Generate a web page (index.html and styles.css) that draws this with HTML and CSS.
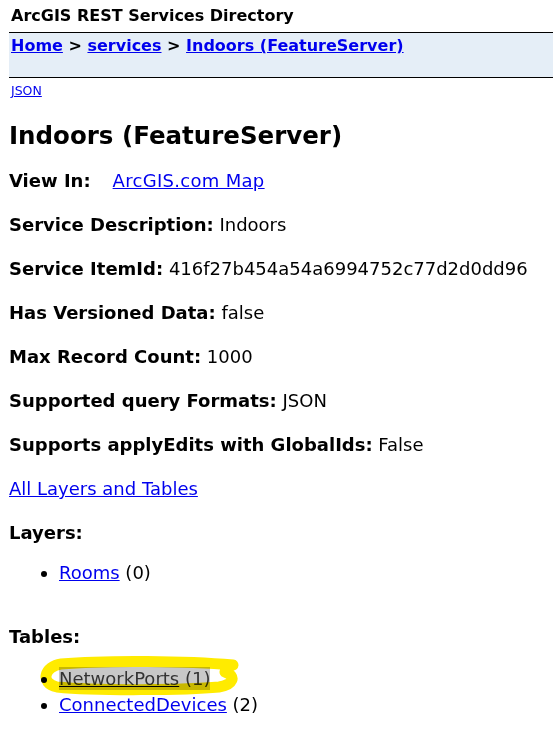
FILE: index.html
```html
<!DOCTYPE html>
<html>
<head>
<meta charset="utf-8">
<title>Indoors (FeatureServer)</title>
<link rel="stylesheet" href="styles.css">
</head>
<body>
<div class="header">ArcGIS REST Services Directory</div>
<div class="nav"><a href="#">Home</a> &gt; <a href="#">services</a> &gt; <a href="#">Indoors (FeatureServer)</a></div>
<div class="json"><a href="#">JSON</a></div>
<h2 class="title">Indoors (FeatureServer)</h2>
<div class="content">
  <p class="row first"><b>View In:</b><a class="viewin" href="#">ArcGIS.com Map</a></p>
  <p class="row"><b>Service Description:</b> Indoors</p>
  <p class="row"><b>Service ItemId:</b> 416f27b454a54a6994752c77d2d0dd96</p>
  <p class="row"><b>Has Versioned Data:</b> false</p>
  <p class="row"><b>Max Record Count:</b> 1000</p>
  <p class="row"><b>Supported query Formats:</b> JSON</p>
  <p class="row"><b>Supports applyEdits with GlobalIds:</b> False</p>
  <p class="row"><a href="#">All Layers and Tables</a></p>
  <p class="row"><b>Layers:</b></p>
  <ul class="list layers">
    <li><a href="#">Rooms</a> (0)</li>
  </ul>
  <p class="row tables-head"><b>Tables:</b></p>
  <ul class="list tables">
    <li class="marked"><span class="sel"><a href="#">NetworkPorts</a> (1)</span>
      <svg class="marker" width="220" height="46" viewBox="0 0 220 46">
        <path d="M196 10 C 150 6, 70 5, 24 9 C 8 11, 2 28, 20 32 C 60 36, 150 35, 182 32 C 196 30, 200 21, 188 17" />
      </svg>
    </li>
    <li><a href="#">ConnectedDevices</a> (2)</li>
  </ul>
</div>
</body>
</html>
```
FILE: styles.css
```css
html, body {
  margin: 0;
  padding: 0;
  background: #ffffff;
  color: #000000;
  font-family: "DejaVu Sans", Verdana, sans-serif;
  font-size: 18px;
}

a {
  color: #0000ee;
}

.header {
  margin: 6px 0 0 11px;
  line-height: 20px;
  font-size: 16px;
  font-weight: bold;
}

.nav {
  margin: 6px 0 0 9px;
  background: #e5eef7;
  border-top: 1px solid #000;
  border-bottom: 1px solid #000;
  padding: 3px 0 21px 2px;
  line-height: 20px;
  font-size: 16px;
  font-weight: bold;
}

.json {
  margin: 6px 0 0 11px;
  line-height: 14px;
  font-size: 12.5px;
}

.title {
  margin: 23px 0 0 9px;
  line-height: 30px;
  font-size: 24.5px;
  font-weight: bold;
}

.content {
  padding-left: 9px;
}

.row {
  margin: 24px 0 0 0;
  line-height: 20px;
}

.row.first {
  margin-top: 20px;
}

.viewin {
  margin-left: 22px;
  letter-spacing: 0.3px;
}

.list {
  margin: 17px 0 0 0;
  padding-left: 50px;
  line-height: 26px;
}

.tables-head {
  margin-top: 41px;
}

.list.tables {
  margin-top: 19px;
}

.marked {
  position: relative;
}

.sel {
  background: #c8c8c8;
  color: #333333;
  padding: 1px 0;
}

.sel a {
  color: #333333;
  text-decoration-color: #0000ee;
}

.marker {
  position: absolute;
  left: -22px;
  top: -11px;
  pointer-events: none;
  mix-blend-mode: multiply;
}

.marker path {
  fill: none;
  stroke: #ffeb00;
  stroke-width: 11;
  stroke-linecap: round;
  stroke-linejoin: round;
}
```
